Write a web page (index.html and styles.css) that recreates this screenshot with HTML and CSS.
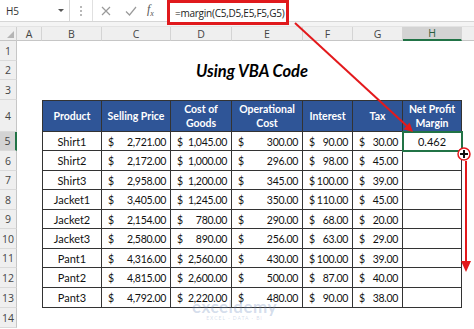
FILE: index.html
```html
<!DOCTYPE html>
<html>
<head>
<meta charset="utf-8">
<link rel="stylesheet" href="styles.css">
</head>
<body>
<div class="app">
  <div class="fbar">
    <div class="namebox"><span class="nb-text">H5</span><span class="nb-arrow"></span></div>
    <div class="fsep"><i></i><i></i><i></i></div>
    <div class="fbtns">
      <svg class="ico" width="10" height="10" viewBox="0 0 10 10"><path d="M1 1 L9 9 M9 1 L1 9" stroke="#9a9a9a" stroke-width="1.2" fill="none"/></svg>
      <svg class="ico" width="12" height="10" viewBox="0 0 12 10"><path d="M1 5.5 L4.5 9 L11 1" stroke="#9a9a9a" stroke-width="1.2" fill="none"/></svg>
      <span class="fx">f<sub>x</sub></span>
    </div>
    <div class="finput"><div class="fhl">=margin(C5,D5,E5,F5,G5)</div></div>
  </div>
  <div class="fgap"></div>
  <div class="sheet">
    <div class="corner"><span class="tri"></span></div>
    <div class="ch">A</div><div class="ch">B</div><div class="ch">C</div><div class="ch">D</div><div class="ch">E</div><div class="ch">F</div><div class="ch">G</div><div class="ch ch-sel">H</div><div class="ch ch-i"></div>

    <div class="rh">1</div>
    <div class="rh">2</div><div class="title">Using VBA Code</div>
    <div class="rh">3</div>

    <div class="rh">4</div>
    <div class="t th first">Product</div>
    <div class="t th">Selling Price</div>
    <div class="t th">Cost of<br>Goods</div>
    <div class="t th">Operational<br>Cost</div>
    <div class="t th">Interest</div>
    <div class="t th">Tax</div>
    <div class="t th">Net Profit<br>Margin</div>

    <div class="rh rh-sel">5</div>
    <div class="t first ctr">Shirt1</div>
    <div class="t acc"><span>$</span><span>2,721.00</span></div>
    <div class="t acc"><span>$</span><span>1,045.00</span></div>
    <div class="t acc"><span>$</span><span>300.00</span></div>
    <div class="t acc"><span>$</span><span>90.00</span></div>
    <div class="t acc"><span>$</span><span>30.00</span></div>
    <div class="t ctr sel">0.462</div>

    <div class="rh">6</div>
    <div class="t first ctr">Shirt2</div>
    <div class="t acc"><span>$</span><span>2,172.00</span></div>
    <div class="t acc"><span>$</span><span>1,000.00</span></div>
    <div class="t acc"><span>$</span><span>296.00</span></div>
    <div class="t acc"><span>$</span><span>98.00</span></div>
    <div class="t acc"><span>$</span><span>45.00</span></div>
    <div class="t"></div>

    <div class="rh">7</div>
    <div class="t first ctr">Shirt3</div>
    <div class="t acc"><span>$</span><span>2,958.00</span></div>
    <div class="t acc"><span>$</span><span>1,200.00</span></div>
    <div class="t acc"><span>$</span><span>345.00</span></div>
    <div class="t acc"><span>$</span><span>100.00</span></div>
    <div class="t acc"><span>$</span><span>39.00</span></div>
    <div class="t"></div>

    <div class="rh">8</div>
    <div class="t first ctr">Jacket1</div>
    <div class="t acc"><span>$</span><span>3,405.00</span></div>
    <div class="t acc"><span>$</span><span>1,245.00</span></div>
    <div class="t acc"><span>$</span><span>350.00</span></div>
    <div class="t acc"><span>$</span><span>110.00</span></div>
    <div class="t acc"><span>$</span><span>45.00</span></div>
    <div class="t"></div>

    <div class="rh">9</div>
    <div class="t first ctr">Jacket2</div>
    <div class="t acc"><span>$</span><span>2,154.00</span></div>
    <div class="t acc"><span>$</span><span>780.00</span></div>
    <div class="t acc"><span>$</span><span>290.00</span></div>
    <div class="t acc"><span>$</span><span>68.00</span></div>
    <div class="t acc"><span>$</span><span>20.00</span></div>
    <div class="t"></div>

    <div class="rh">10</div>
    <div class="t first ctr">Jacket3</div>
    <div class="t acc"><span>$</span><span>2,580.00</span></div>
    <div class="t acc"><span>$</span><span>890.00</span></div>
    <div class="t acc"><span>$</span><span>256.00</span></div>
    <div class="t acc"><span>$</span><span>63.00</span></div>
    <div class="t acc"><span>$</span><span>29.00</span></div>
    <div class="t"></div>

    <div class="rh">11</div>
    <div class="t first ctr">Pant1</div>
    <div class="t acc"><span>$</span><span>4,316.00</span></div>
    <div class="t acc"><span>$</span><span>2,560.00</span></div>
    <div class="t acc"><span>$</span><span>430.00</span></div>
    <div class="t acc"><span>$</span><span>100.00</span></div>
    <div class="t acc"><span>$</span><span>39.00</span></div>
    <div class="t"></div>

    <div class="rh">12</div>
    <div class="t first ctr">Pant2</div>
    <div class="t acc"><span>$</span><span>4,815.00</span></div>
    <div class="t acc"><span>$</span><span>2,600.00</span></div>
    <div class="t acc"><span>$</span><span>500.00</span></div>
    <div class="t acc"><span>$</span><span>87.00</span></div>
    <div class="t acc"><span>$</span><span>40.00</span></div>
    <div class="t"></div>

    <div class="rh">13</div>
    <div class="t first ctr">Pant3</div>
    <div class="t acc"><span>$</span><span>4,792.00</span></div>
    <div class="t acc"><span>$</span><span>2,220.00</span></div>
    <div class="t acc"><span>$</span><span>480.00</span></div>
    <div class="t acc"><span>$</span><span>90.00</span></div>
    <div class="t acc"><span>$</span><span>38.00</span></div>
    <div class="t"></div>

    <div class="rh">14</div>
  </div>

  <div class="watermark"><span class="wm-main">exceldemy</span><span class="wm-sub">EXCEL · DATA · BI</span></div>

  <svg class="overlay" width="474" height="329" viewBox="0 0 474 329">
    <line x1="295" y1="23" x2="408" y2="127" stroke="#e3191c" stroke-width="2"/>
    <polygon points="413,132 403.6,129.2 409.6,122.6" fill="#e3191c"/>
    <line x1="466" y1="161" x2="466" y2="263" stroke="#e3191c" stroke-width="2"/>
    <polygon points="466,272 461,261 471,261" fill="#e3191c"/>
    <circle cx="464" cy="154" r="6" fill="#fff" stroke="#e3191c" stroke-width="1.5"/>
    <path d="M464 150 V158 M460 154 H468" stroke="#111" stroke-width="2"/>
  </svg>
</div>
</body>
</html>
```
FILE: styles.css
```css
* { box-sizing: border-box; }
html, body { margin: 0; padding: 0; background: #fff; }
.app {
  position: relative;
  width: 474px;
  height: 329px;
  overflow: hidden;
  font-family: "Open Sans", "Noto Sans", sans-serif;
}

/* formula bar */
.fbar {
  display: flex;
  height: 22px;
  background: #fff;
  border-bottom: 1px solid #d6d6d6;
}
.namebox {
  width: 70px;
  display: flex;
  align-items: center;
  justify-content: space-between;
  padding: 0 5px 0 6px;
  border-right: 1px solid #d6d6d6;
  font-size: 10px;
  color: #333;
}
.nb-arrow {
  width: 0; height: 0;
  border-left: 3px solid transparent;
  border-right: 3px solid transparent;
  border-top: 3px solid #555;
}
.fsep {
  width: 22px;
  display: flex;
  flex-direction: column;
  align-items: center;
  justify-content: center;
  gap: 2px;
}
.fsep i { width: 2px; height: 2px; background: #b8b8b8; display: block; }
.fbtns {
  width: 75px;
  display: flex;
  align-items: center;
  padding-left: 8px;
  border-left: 1px solid #e0e0e0;
}
.fbtns .ico:first-child { margin-right: 14px; }
.fbtns .ico:nth-child(2) { margin-right: 10px; }
.fx {
  font-family: "Liberation Serif", serif;
  font-style: italic;
  font-size: 12px;
  color: #555;
}
.fx sub { font-size: 8px; }
.finput {
  flex: 1;
  position: relative;
}
.fhl {
  position: relative;
  z-index: 2;
  width: 122px;
  height: 25px;
  border: 3px solid #e0191c;
  background: #fff;
  font-family: "Open Sans", sans-serif;
  font-size: 10px;
  color: #222;
  padding: 3px 0 0 5px;
  white-space: nowrap;
  letter-spacing: -0.25px;
}
.fgap { height: 5px; background: #f4f4f4; border-bottom: 1px solid #e3e3e3; }

/* sheet */
.sheet {
  display: grid;
  grid-template-columns: 17px 25px 60px 69px 61px 71px 50px 50px 59px 1fr;
  grid-template-rows: 14px 20px 19px 20px 32px 19px 20px 19px 20px 19px 20px 19px 20px 20px 20px;
  font-family: "Lato", "Open Sans", sans-serif;
  font-size: 11px;
  color: #111;
}
.corner {
  grid-column: 1;
  background: #efefef;
  border-right: 1px solid #cfcfcf;
  border-bottom: 1px solid #c6c6c6;
  position: relative;
}
.tri {
  position: absolute;
  right: 2px; bottom: 2px;
  width: 0; height: 0;
  border-left: 7px solid transparent;
  border-bottom: 7px solid #b5b5b5;
}
.ch {
  background: #efefef;
  border-right: 1px solid #d4d4d4;
  border-bottom: 1px solid #c6c6c6;
  font-family: "Open Sans", sans-serif;
  font-size: 10.5px;
  color: #444;
  display: flex;
  align-items: center;
  justify-content: center;
}
.ch-sel {
  background: #d3d3d3;
  border-bottom: 2px solid #217346;
  color: #2a5d3c;
}
.ch-i { border-right: none; }
.rh {
  grid-column: 1;
  background: #efefef;
  border-right: 1px solid #c6c6c6;
  border-bottom: 1px solid #dadada;
  font-family: "Open Sans", sans-serif;
  font-size: 10.5px;
  color: #444;
  display: flex;
  align-items: center;
  justify-content: center;
}
.rh-sel {
  background: #d3d3d3;
  border-right: 2px solid #217346;
}
.title {
  grid-column: 3 / 10;
  display: flex;
  align-items: center;
  justify-content: center;
  font-weight: bold;
  font-style: italic;
  font-size: 16.5px;
  color: #000;
}
.t {
  border-right: 1px solid #333;
  border-bottom: 1px solid #333;
  display: flex;
  align-items: center;
  white-space: nowrap;
}
.first { grid-column: 3; border-left: 1px solid #333; }
.th {
  background: #2f5597;
  color: #fff;
  font-weight: bold;
  border-top: 1px solid #333;
  justify-content: center;
  text-align: center;
  line-height: 14px;
  font-size: 10.5px;
}
.ctr { justify-content: center; }
.acc {
  justify-content: space-between;
  padding: 1px 4px 0 6px;
  font-size: 10.5px;
  letter-spacing: -0.3px;
}
.sel {
  outline: 2px solid #217346;
  outline-offset: -1px;
  position: relative;
}

.watermark {
  position: absolute;
  left: 192px;
  top: 298px;
  display: flex;
  flex-direction: column;
  align-items: center;
  color: rgba(110, 140, 190, 0.3);
  font-family: "Lato", sans-serif;
  pointer-events: none;
}
.wm-main { font-size: 17px; font-weight: bold; line-height: 17px; letter-spacing: 0.5px; }
.wm-sub { font-size: 5px; letter-spacing: 1px; line-height: 7px; }

.overlay {
  position: absolute;
  left: 0;
  top: 0;
  pointer-events: none;
  z-index: 5;
}
```
